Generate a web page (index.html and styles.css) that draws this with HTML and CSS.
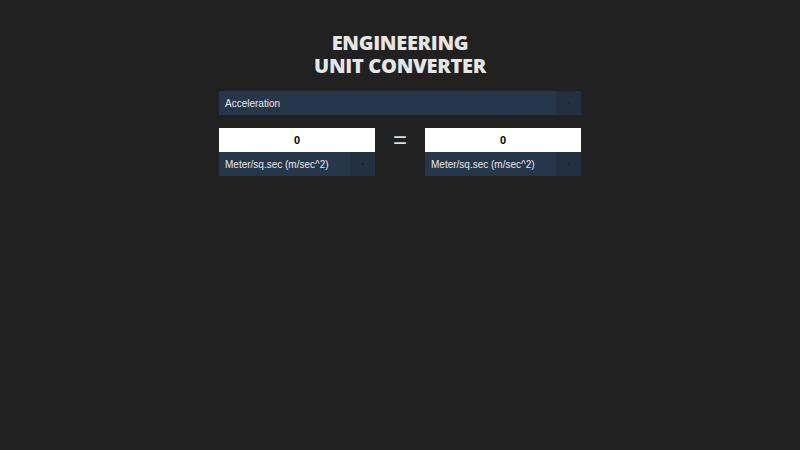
FILE: index.html
```html
<!DOCTYPE html>
<html>
<head>
<meta charset="utf-8">
<link rel="stylesheet" href="styles.css">
</head>
<body>
<main class="app">
  <h1 class="title"><span class="line">ENGINEERING</span><span class="line">UNIT CONVERTER</span></h1>
  <div class="select wide">
    <span class="select-text">Acceleration</span>
    <span class="select-arrow">▼</span>
  </div>
  <div class="row">
    <div class="unit">
      <div class="value">0</div>
      <div class="select">
        <span class="select-text">Meter/sq.sec (m/sec^2)</span>
        <span class="select-arrow">▼</span>
      </div>
    </div>
    <div class="equals">=</div>
    <div class="unit">
      <div class="value">0</div>
      <div class="select">
        <span class="select-text">Meter/sq.sec (m/sec^2)</span>
        <span class="select-arrow">▼</span>
      </div>
    </div>
  </div>
</main>
</body>
</html>
```
FILE: styles.css
```css
html, body {
  margin: 0;
  padding: 0;
  background: #212121;
  height: 100%;
}
body {
  font-family: "Liberation Sans", Arial, sans-serif;
}
.app {
  width: 362px;
  margin: 0 auto;
  padding-top: 31px;
}
.title {
  margin: 0 0 14px;
  text-align: center;
  font-family: "Open Sans", sans-serif;
  font-weight: 800;
  font-size: 20px;
  color: #e6e6e6;
  letter-spacing: -0.3px;
}
.line {
  display: block;
  height: 23px;
  line-height: 23px;
}
.select {
  display: flex;
  align-items: stretch;
  height: 24px;
  background: #27374b;
  color: #e8e8e8;
  font-family: "Liberation Sans", Arial, sans-serif;
  font-size: 10px;
}
.select-text {
  flex: 1;
  display: flex;
  align-items: center;
  padding-left: 6px;
}
.select-arrow {
  width: 25px;
  display: flex;
  align-items: center;
  justify-content: center;
  background: #223042;
  color: #1a2533;
  font-size: 5px;
}
.row {
  display: flex;
  margin-top: 13px;
}
.unit {
  width: 156px;
}
.value {
  height: 24px;
  background: #ffffff;
  color: #000;
  font-weight: bold;
  font-size: 11px;
  display: flex;
  align-items: center;
  justify-content: center;
}
.equals {
  flex: 1;
  text-align: center;
  color: #dcdcdc;
  font-size: 24px;
  line-height: 24px;
}
```
